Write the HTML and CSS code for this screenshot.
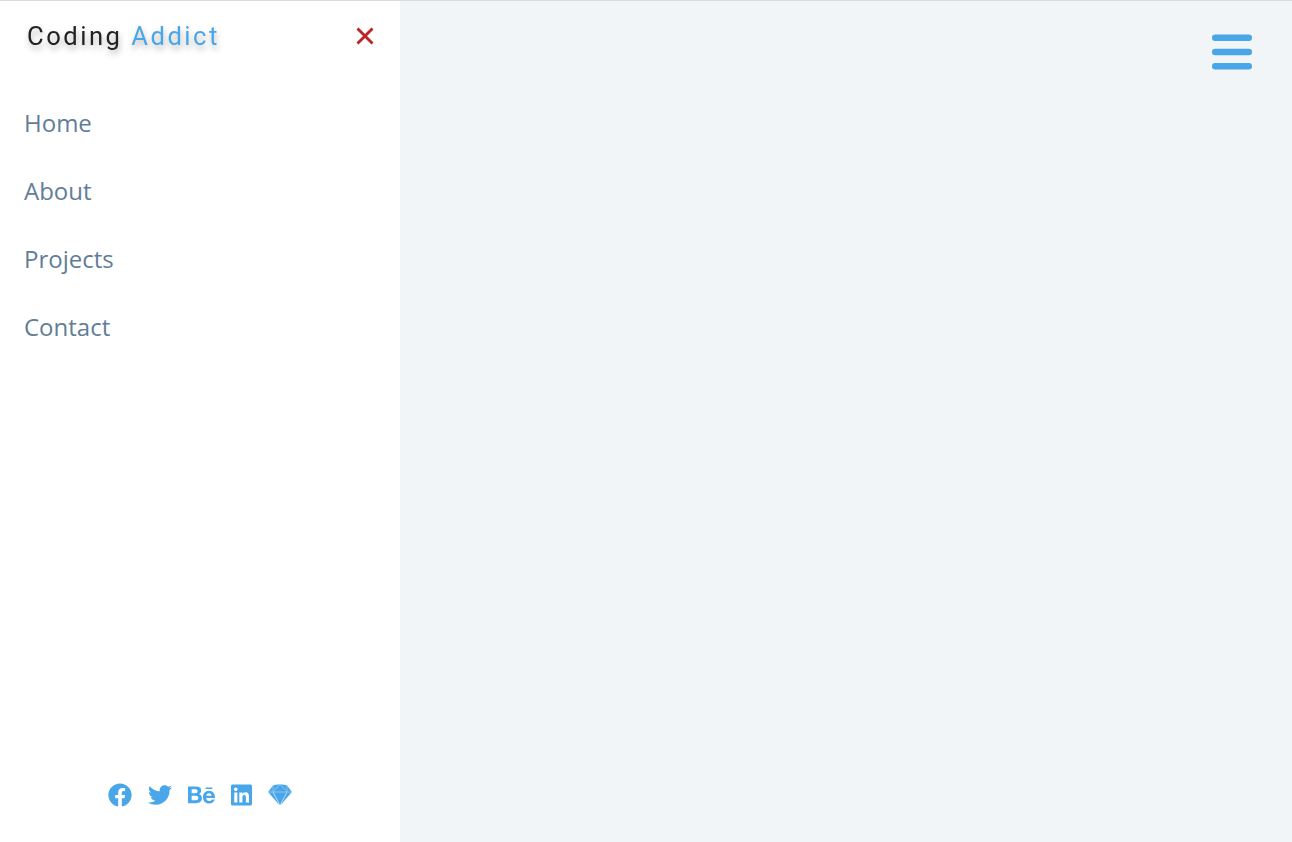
FILE: index.html
```html
<!DOCTYPE html>
<html lang="en">
<head>
    <meta charset="UTF-8">
    <meta name="viewport" content="width=device-width, initial-scale=1.0">
    <title>Coding Addict</title>
    <link rel="stylesheet" href="styles.css">
</head>
<body>
    <aside class="sidebar">
        <div class="sidebar-header">
            <h1 class="logo">Coding <span class="logo-accent">Addict</span></h1>
            <button class="close-btn" type="button" aria-label="Close">
                <svg viewBox="0 0 20 20" width="20" height="20"><path d="M2.5 2.5l15 15M17.5 2.5l-15 15"/></svg>
            </button>
        </div>

        <ul class="links">
            <li><a href="#home">Home</a></li>
            <li><a href="#about">About</a></li>
            <li><a href="#projects">Projects</a></li>
            <li><a href="#contact">Contact</a></li>
        </ul>

        <ul class="social">
            <li><a href="#facebook"><svg viewBox="0 0 512 512" width="24" height="24"><path d="M504 256C504 119 393 8 256 8S8 119 8 256c0 123.78 90.69 226.38 209.25 245V327.69h-63V256h63v-54.64c0-62.15 37-96.48 93.67-96.48 27.14 0 55.52 4.84 55.52 4.84v61h-31.28c-30.8 0-40.41 19.12-40.41 38.73V256h68.78l-11 71.69h-57.78V501C413.31 482.38 504 379.78 504 256z"/></svg></a></li>
            <li><a href="#twitter"><svg viewBox="0 0 512 512" width="24" height="24"><path d="M459.37 151.716c.325 4.548.325 9.097.325 13.645 0 138.72-105.583 298.558-298.558 298.558-59.452 0-114.68-17.219-161.137-47.106 8.447.974 16.568 1.299 25.34 1.299 49.055 0 94.213-16.568 130.274-44.832-46.132-.975-84.792-31.188-98.112-72.772 6.498.974 12.995 1.624 19.818 1.624 9.421 0 18.843-1.3 27.614-3.573-48.081-9.747-84.143-51.98-84.143-102.985v-1.299c13.969 7.797 30.214 12.67 47.431 13.319-28.264-18.843-46.781-51.005-46.781-87.391 0-19.492 5.197-37.36 14.294-52.954 51.655 63.675 129.3 105.258 216.365 109.807-1.624-7.797-2.599-15.918-2.599-24.04 0-57.828 46.782-104.934 104.934-104.934 30.213 0 57.502 12.67 76.67 33.137 23.715-4.548 46.456-13.32 66.599-25.34-7.798 24.366-24.366 44.833-46.132 57.827 21.117-2.273 41.584-8.122 60.426-16.243-14.292 20.791-32.161 39.308-52.628 54.253z"/></svg></a></li>
            <li><a href="#behance"><svg viewBox="0 0 576 512" width="27" height="24"><path d="M232 237.2c31.8-15.2 48.4-38.2 48.4-74 0-70.6-52.6-87.8-113.3-87.8H0v354.4h171.8c64.4 0 124.9-30.9 124.9-102.9 0-44.5-21.1-77.4-64.7-89.7zM77.9 135.9H151c28.1 0 53.4 7.9 53.4 40.5 0 30.1-19.7 42.2-47.5 42.2h-79v-82.7zm83.3 233.7H77.9V272h84.9c34.3 0 56 14.3 56 50.6 0 35.8-25.9 47-57.6 47zm358.5-240.7H376V94h143.7v34.9zM576 305.2c0-75.9-44.4-139.2-124.9-139.2-78.2 0-131.3 58.8-131.3 135.8 0 79.9 50.3 134.7 131.3 134.7 61.3 0 101-27.6 120.1-86.3H509c-6.7 21.9-34.3 33.5-55.7 33.5-41.3 0-63-24.2-63-65.3h185.1c.3-4.2.6-8.7.6-13.2zM390.4 274c2.3-33.7 24.7-54.8 58.5-54.8 35.4 0 53.2 20.8 56.2 54.8H390.4z"/></svg></a></li>
            <li><a href="#linkedin"><svg viewBox="0 0 448 512" width="21" height="24"><path d="M416 32H31.9C14.3 32 0 46.5 0 64.3v383.4C0 465.5 14.3 480 31.9 480H416c17.6 0 32-14.5 32-32.3V64.3c0-17.8-14.4-32.3-32-32.3zM135.4 416H69V202.2h66.5V416zm-33.2-243c-21.3 0-38.5-17.3-38.5-38.5S80.9 96 102.2 96c21.2 0 38.5 17.3 38.5 38.5 0 21.3-17.2 38.5-38.5 38.5zm282.1 243h-66.4V312c0-24.8-.5-56.7-34.5-56.7-34.6 0-39.9 27-39.9 54.9V416h-66.4V202.2h63.7v29.2h.9c8.9-16.8 30.6-34.5 62.9-34.5 67.2 0 79.7 44.3 79.7 101.9V416z"/></svg></a></li>
            <li><a href="#sketch"><svg class="sketch-icon" viewBox="0 0 512 512" width="24" height="24"><path d="M27.5 162.2L9 187.1h90.5l6.9-130.7-78.9 105.8zM396.3 45.7L267.7 32l135.7 147.2-7.1-133.5zM112.2 218.3l-11.2-22H9.9L234.8 458 112.2 218.3zm2-31.2h284l-81.5-88.5L256.3 32 114.2 187.1zm297.3 9.1L277.6 458l224.8-261.7h-90.9zM415.4 69L406 56.4l.9 17.3 6.1 113.4h90.3L415.4 69zM113.5 93.5l-4.6 85.6L244.7 32 116.1 45.7l-2.6 47.8zM394.6 196.2H119.4l137 265.8 138.2-265.8z"/></svg></a></li>
        </ul>
    </aside>

    <main class="main">
        <button class="toggle-btn" type="button" aria-label="Open menu">
            <svg viewBox="0 0 448 512" width="40" height="46"><rect y="60" width="448" height="72" rx="36"/><rect y="220" width="448" height="72" rx="36"/><rect y="380" width="448" height="72" rx="36"/></svg>
        </button>
    </main>
</body>
</html>
```

FILE: styles.css
```css
* {
    box-sizing: border-box;
    margin: 0;
    padding: 0;
}

body {
    display: flex;
    height: 842px;
    overflow: hidden;
    border-top: 1px solid #dadde0;
    background: #f1f5f8;
    font-family: "Open Sans", sans-serif;
}

ul {
    list-style-type: none;
}

button {
    border: none;
    background: transparent;
    cursor: pointer;
}

svg {
    display: block;
}

.sidebar {
    display: flex;
    flex-direction: column;
    width: 400px;
    height: 100%;
    background: #fff;
}

.sidebar-header {
    display: flex;
    align-items: center;
    justify-content: space-between;
    height: 69px;
    padding: 0 25px 0 27px;
}

.logo {
    font-family: Roboto, sans-serif;
    font-size: 25.6px;
    font-weight: 400;
    letter-spacing: 2.5px;
    color: #222;
    text-shadow: 1px 4px 6px rgba(0, 0, 0, 0.3);
    transform: translateZ(0);
}

.logo-accent {
    color: #49a6e9;
}

.close-btn svg {
    fill: none;
    stroke: #bb2525;
    stroke-width: 2.9;
}

.links {
    flex: 1;
    padding-top: 19px;
}

.links a {
    display: block;
    padding: 0 24px;
    font-size: 24px;
    line-height: 68px;
    color: #617d98;
    text-decoration: none;
}

.social {
    display: flex;
    justify-content: center;
    gap: 16px;
    padding-bottom: 35px;
}

.social svg,
.toggle-btn svg {
    fill: #49a6e9;
}

.social .sketch-icon {
    stroke: #49a6e9;
    stroke-width: 6;
}

.main {
    display: flex;
    flex: 1;
    align-items: flex-start;
    justify-content: flex-end;
    padding: 28px 40px;
}
```
